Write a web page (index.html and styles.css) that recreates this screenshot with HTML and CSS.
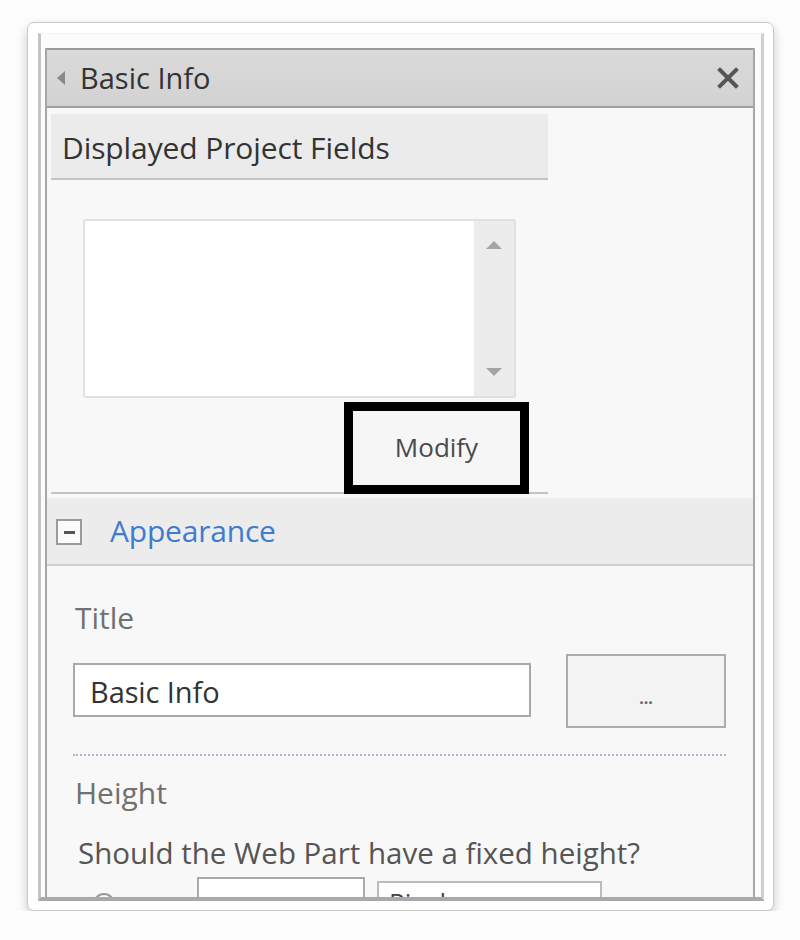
FILE: index.html
```html
<!DOCTYPE html>
<html>
<head>
<meta charset="utf-8">
<link rel="stylesheet" href="styles.css">
</head>
<body>
<div class="card">
  <div class="frame">
    <div class="panel">
      <div class="panel-head">
        <span class="tri"></span>
        <span class="panel-title">Basic Info</span>
        <svg class="close" width="22" height="22" viewBox="0 0 22 22"><path d="M3 3 L19 19 M19 3 L3 19" stroke="#555" stroke-width="4" stroke-linecap="square"/></svg>
      </div>
      <div class="fields">
        <div class="tab">Displayed Project Fields</div>
        <div class="listbox">
          <div class="list-area"></div>
          <div class="scroll">
            <span class="arr up"></span>
            <span class="arr down"></span>
          </div>
        </div>
        <div class="modify-row">
          <div class="modify">Modify</div>
        </div>
      </div>
      <div class="section-head">
        <span class="minus-box"><span class="minus"></span></span>
        <span class="section-title">Appearance</span>
      </div>
      <div class="section-body">
        <div class="label">Title</div>
        <div class="title-row">
          <div class="text-input">Basic Info</div>
          <div class="dots-btn">...</div>
        </div>
        <div class="dotted"></div>
        <div class="label">Height</div>
        <div class="question">Should the Web Part have a fixed height?</div>
        <div class="height-row">
          <span class="radio"></span>
          <span class="num-box"></span>
          <span class="unit-box">Pixels</span>
        </div>
      </div>
    </div>
  </div>
</div>
</body>
</html>
```

FILE: styles.css
```css
* { box-sizing: border-box; }
html, body { margin: 0; padding: 0; background: #fdfdfd; }
body { font-family: "Open Sans", "Noto Sans", sans-serif; }

.card {
  margin: 22px 0 0 27px;
  width: 747px;
  height: 889px;
  background: #fff;
  border: 1px solid #c9c9c9;
  border-radius: 7px;
  box-shadow: 0 5px 12px rgba(0,0,0,0.2);
  padding: 10px 9px 9px 10px;
}

.frame {
  height: 868px;
  border-left: 3px solid #c4c4c4;
  border-right: 3px solid #d0d0d0;
  border-bottom: 4px solid #a9a9a9;
  border-top: 1px solid #f2f2f2;
  padding: 14px 6px 0 4px;
  overflow: hidden;
  background: #fcfcfc;
}

.panel {
  height: 900px;
  background: #f8f8f8;
  border-left: 2px solid #a7a7a7;
  border-right: 2px solid #a7a7a7;
}

.panel-head {
  height: 60px;
  background: linear-gradient(#dadada, #d2d2d2);
  border-top: 2px solid #9c9c9c;
  border-bottom: 2px solid #9f9f9f;
  display: flex;
  align-items: center;
  padding: 0 14px 0 10px;
}
.tri {
  width: 0; height: 0;
  border-top: 7px solid transparent;
  border-bottom: 7px solid transparent;
  border-right: 8px solid #8a8a8a;
  margin-right: 15px;
}
.panel-title {
  font-size: 29px;
  line-height: 40px;
  color: #333;
  flex: 1;
}
.close { display: block; }

.fields {
  width: 497px;
  margin: 6px 0 0 4px;
  border-bottom: 2px solid #c3c3c3;
}
.tab {
  height: 66px;
  background: #ebebeb;
  border-bottom: 2px solid #c3c3c3;
  font-size: 30px;
  line-height: 40px;
  color: #333;
  padding: 14px 0 0 11px;
  letter-spacing: -0.1px;
}
.listbox {
  margin: 39px 0 0 32px;
  width: 433px;
  height: 179px;
  border: 2px solid #e0e0e0;
  border-radius: 3px;
  background: #fff;
  display: flex;
}
.list-area { flex: 1; }
.scroll {
  width: 40px;
  background: #ececec;
  display: flex;
  flex-direction: column;
  justify-content: space-between;
  align-items: center;
  padding: 20px 0 20px;
}
.arr {
  width: 0; height: 0;
  border-left: 8px solid transparent;
  border-right: 8px solid transparent;
}
.arr.up { border-bottom: 8px solid #a4a4a4; }
.arr.down { border-top: 8px solid #a4a4a4; }

.modify-row {
  display: flex;
  justify-content: flex-end;
  padding-right: 19px;
  margin-top: 4px;
  margin-bottom: -2px;
}
.modify {
  width: 185px;
  height: 92px;
  border: 9px solid #000;
  background: #f6f6f6;
  display: flex;
  align-items: center;
  justify-content: center;
  font-size: 26px;
  color: #4a4a4a;
  padding-bottom: 2px;
}

.section-head {
  margin-top: 4px;
  height: 68px;
  background: #ececec;
  border-bottom: 2px solid #cfcfcf;
  display: flex;
  align-items: center;
  padding: 0 0 0 9px;
}
.minus-box {
  width: 26px; height: 26px;
  border: 2px solid #9a9a9a;
  background: #fafafa;
  display: flex;
  align-items: center;
  justify-content: center;
  margin-right: 28px;
  margin-top: 2px;
}
.minus { width: 11px; height: 3px; background: #555; }
.section-title {
  font-size: 30px;
  line-height: 40px;
  color: #3f7bd0;
  letter-spacing: -0.2px;
}

.section-body { padding: 32px 27px 0 26px; }
.label {
  font-size: 30px;
  line-height: 40px;
  color: #707070;
  padding-left: 2px;
}
.title-row {
  display: flex;
  align-items: flex-start;
  margin-top: 16px;
}
.text-input {
  width: 458px;
  height: 54px;
  margin-top: 9px;
  border: 2px solid #a9a9a9;
  background: #fff;
  font-size: 29px;
  line-height: 40px;
  color: #333;
  padding: 7px 0 0 15px;
  letter-spacing: -0.1px;
}
.dots-btn {
  margin-left: 35px;
  width: 160px;
  height: 74px;
  border: 2px solid #acacac;
  background: #f3f3f3;
  font-size: 16px;
  font-weight: bold;
  color: #666;
  display: flex;
  align-items: center;
  justify-content: center;
  padding-top: 14px;
}
.dotted {
  margin: 26px 0 17px;
  border-top: 2px dotted #a9b7d6;
}
.question {
  margin: 20px 0 0 5px;
  font-size: 29.5px;
  line-height: 40px;
  color: #555;
}
.height-row {
  display: flex;
  align-items: flex-start;
  margin-top: 4px;
}
.radio {
  width: 22px; height: 22px;
  border-radius: 50%;
  border: 2px solid #999;
  margin: 16px 0 0 20px;
}
.num-box {
  width: 168px; height: 40px;
  border: 2px solid #aaa;
  background: #fff;
  margin-left: 82px;
}
.unit-box {
  width: 225px; height: 40px;
  border: 2px solid #bbb;
  background: #fff;
  margin: 4px 0 0 12px;
  font-size: 26px;
  line-height: 34px;
  color: #444;
  padding: 2px 0 0 10px;
}
```
